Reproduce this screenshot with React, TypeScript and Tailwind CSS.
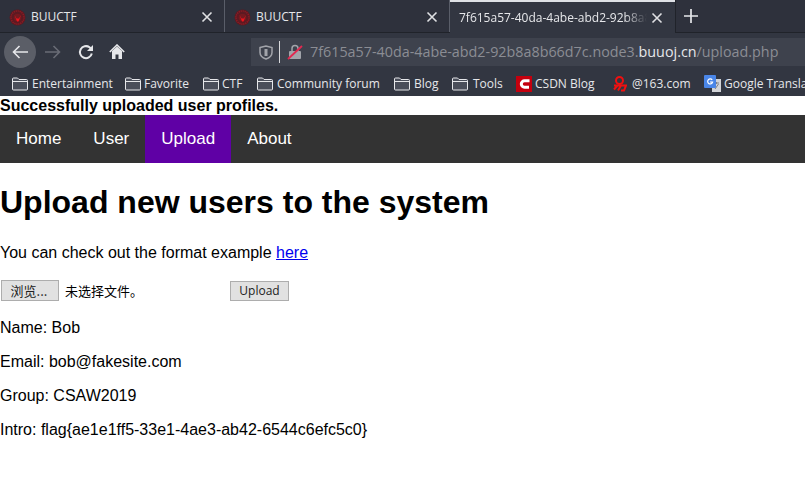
const folder = (
  <svg width="16" height="14" viewBox="0 0 16 14" className="shrink-0" fill="none">
    <path d="M0.500 12V2A1 1 0 0 1 1.500 1H5.500L7 2.500H14.500A1 1 0 0 1 15.500 3.500V12A1 1 0 0 1 14.500 13H1.500A1 1 0 0 1 0.500 12Z" fill="#4a4e5a" stroke="#e6e7ea" />
    <path d="M0.500 4.500H15.500" stroke="#e6e7ea" />
  </svg>
);

const Close = () => (
  <svg width="12" height="12" viewBox="0 0 12 12" fill="none" stroke="#dfe0e3" strokeWidth="1.600" className="shrink-0">
    <path d="M1.500 1.500L10.500 10.500M10.500 1.500L1.500 10.500" />
  </svg>
);

const Favicon = () => (
  <svg width="17" height="17" viewBox="0 0 17 17" className="shrink-0">
    <circle cx="8.500" cy="8.500" r="8" fill="#5c1a22" />
    <circle cx="8.500" cy="8.500" r="6.500" fill="none" stroke="#8c1c24" strokeWidth="1.500" strokeDasharray="1.200 0.800" />
    <circle cx="8.500" cy="8.500" r="3.800" fill="#741a20" />
    <path d="M5.500 6L8 12.500H9.500L12 6L10 9.500H7.500Z" fill="#f0141c" />
  </svg>
);

function Tab({ label }: { label: string }) {
  return (
    <div className="flex h-[32px] w-[225px] items-center border-r border-[#5a5e69] pl-[9px] pr-[11px] pt-[2px]">
      <Favicon />
      <span className="ml-[5px] flex-1 text-[12px] text-[#e6e7ea]">{label}</span>
      <Close />
    </div>
  );
}

function Mark({ label, icon, cls }: { label: string; icon: React.ReactNode; cls: string }) {
  return (
    <div className="flex shrink-0 items-center whitespace-nowrap">
      {icon}
      <span className={`${cls} text-[12px] text-[#e6e7ea]`}>{label}</span>
    </div>
  );
}

export default function App() {
  return (
    <div className="h-[495px] w-[805px] overflow-hidden bg-white font-['Liberation_Sans',Arial,sans-serif] text-[16px] text-black">
      <header className="h-[96px] bg-[#323641] font-['Open_Sans','Noto_Sans',sans-serif]">
        <div className="flex h-[33px] border-b border-[#20232a] bg-[#2e313c]">
          <Tab label="BUUCTF" />
          <Tab label="BUUCTF" />
          <div className="relative -mb-px flex h-[33px] w-[225px] items-center border-t-2 border-[#dfe1e6] bg-[#323641] pl-[9px] pr-[12px]">
            <span className="w-[188px] flex-none overflow-hidden whitespace-nowrap text-[12px] text-[#e6e7ea] [mask-image:linear-gradient(to_right,black_88%,transparent)]">
              7f615a57-40da-4abe-abd2-92b8a8b66d7c
            </span>
            <span className="ml-auto"><Close /></span>
          </div>
          <div className="flex h-[32px] w-[30px] items-center justify-center border-l border-[#20232a]">
            <svg width="14" height="14" viewBox="0 0 14 14" stroke="#e6e7ea" strokeWidth="1.700">
              <path d="M7 0V14M0 7H14" />
            </svg>
          </div>
        </div>
        <div className="flex h-[38px] items-center">
          <div className="ml-[4px] flex h-[32px] w-[32px] items-center justify-center rounded-full bg-[#5b5e67]">
            <svg width="16" height="14" viewBox="0 0 16 14" fill="none" stroke="#e6e7ea" strokeWidth="1.600">
              <path d="M16 7H1.500M7.500 1L1.500 7L7.500 13" />
            </svg>
          </div>
          <svg width="16" height="14" viewBox="0 0 16 14" fill="none" stroke="#696c75" strokeWidth="1.600" className="ml-[9px]">
            <path d="M0 7H14.500M8.500 1L14.500 7L8.500 13" />
          </svg>
          <svg width="16" height="16" viewBox="0 0 16 16" fill="none" stroke="#e6e7ea" strokeWidth="2" className="ml-[17px]">
            <path d="M13.800 9.500A6 6 0 1 1 11.500 3.300L13.500 5" />
            <path d="M15 1V7H9Z" fill="#e6e7ea" stroke="none" />
          </svg>
          <svg width="16" height="16" viewBox="0 0 16 16" fill="none" className="ml-[15px]">
            <path d="M0.800 8L8 1L15.200 8" stroke="#e6e7ea" strokeWidth="1.600" />
            <path d="M3 7V15H6.500V10.500H9.500V15H13V7L8 2.500Z" fill="#e6e7ea" />
          </svg>
          <div className="ml-[126px] flex h-[28px] flex-1 items-center bg-[#3e424d]">
            <svg width="14" height="15" viewBox="0 0 14 15" fill="none" stroke="#a2a4aa" strokeWidth="1.500" className="ml-[8px] shrink-0">
              <path d="M1 2.500L7 1L13 2.500V7.500C13 11 10 13 7 14C4 13 1 11 1 7.500Z" />
              <path d="M7 4V11" strokeWidth="3" />
            </svg>
            <div className="ml-[6px] h-[22px] w-px bg-[#d8d9dc]" />
            <svg width="16" height="16" viewBox="0 0 16 16" className="ml-[7px] shrink-0">
              <rect x="2" y="7" width="12" height="8" rx="1" fill="#a2a4aa" />
              <path d="M5 7V4.500A3 3 0 0 1 11 4.500V7" fill="none" stroke="#a2a4aa" strokeWidth="1.500" />
              <path d="M1 15L15 2" stroke="#e22850" strokeWidth="1.800" />
            </svg>
            <span className="ml-[7px] whitespace-nowrap text-[14.33px] text-[#8b8d94]">
              7f615a57-40da-4abe-abd2-92b8a8b66d7c.node3.<span className="text-[#e6e7ea]">buuoj.cn</span>/upload.php
            </span>
          </div>
        </div>
        <div className="flex h-[25px] items-center gap-[13px] pl-[12px]">
          <Mark label="Entertainment" icon={folder} cls="ml-[4px] w-[80px]" />
          <Mark label="Favorite" icon={folder} cls="ml-[3px] w-[46px]" />
          <Mark label="CTF" icon={folder} cls="ml-[3px] w-[22px]" />
          <Mark label="Community forum" icon={folder} cls="ml-[4px] w-[104px]" />
          <Mark label="Blog" icon={folder} cls="ml-[4px] w-[25px]" />
          <Mark label="Tools" icon={folder} cls="ml-[5px] w-[30px]" />
          <Mark
            label="CSDN Blog"
            cls="ml-[3px] w-[65px]"
            icon={
              <svg width="16" height="16" viewBox="0 0 16 16" fill="none" className="shrink-0">
                <rect width="16" height="16" fill="#c4000e" />
                <path d="M13.500 4.800H8.500A3.200 3.200 0 0 0 8.500 11.200H13" stroke="white" strokeWidth="3" />
              </svg>
            }
          />
          <Mark
            label="@163.com"
            cls="ml-[5px] w-[59px]"
            icon={
              <svg width="14" height="16" viewBox="0 0 14 16" fill="none" stroke="#f01010" strokeWidth="2" className="shrink-0">
                <circle cx="6.500" cy="4.500" r="3.500" />
                <path d="M1 9.500H13L11 14.500H8M4.500 9.500L1 13.500M8 9.500L5 14.500" />
              </svg>
            }
          />
          <Mark
            label="Google Translate"
            cls="ml-[2px]"
            icon={
              <svg width="18" height="18" viewBox="0 0 18 18" className="shrink-0">
                <rect x="8" y="4" width="9" height="13" fill="#d2d4d8" />
                <path d="M10 8H15M12.500 7V9M14.500 9L11 14" stroke="#7d8088" fill="none" />
                <rect width="12" height="13" rx="1" fill="#4a86e8" />
                <path d="M8.200 5A2.500 2.500 0 1 0 8.600 7H6" fill="none" stroke="white" strokeWidth="1.200" />
              </svg>
            }
          />
        </div>
      </header>
      <div className="h-[19px] text-[16px] font-bold leading-[19px]">Successfully uploaded user profiles.</div>
      <nav className="flex h-[48px] bg-[#333333] text-[17px] leading-[48px] text-white">
        <a className="px-4">Home</a>
        <a className="px-4">User</a>
        <a className="bg-[#5f00a5] px-4">Upload</a>
        <a className="px-4">About</a>
      </nav>
      <h1 className="mt-[21px] text-[32px] font-bold leading-[37px]">Upload new users to the system</h1>
      <p className="mt-[23px] leading-[18px]">
        You can check out the format example <a className="text-[#0000ee] underline">here</a>
      </p>
      <div className="mt-[18px] flex h-[21px] items-end pl-px leading-[21px]">
        <button className="h-[21px] w-[58px] border border-[#adadad] bg-[#e1e1e1] pr-[2px] text-center font-['Noto_Sans_CJK_SC','Open_Sans',sans-serif] text-[13px] leading-[18px] text-[#222]">浏览...</button>
        <span className="ml-[6px] w-[165px] font-['Noto_Sans_CJK_SC',sans-serif] text-[13px] leading-[21px]">未选择文件。</span>
        <button className="h-[20px] w-[59px] border border-[#adadad] bg-[#e1e1e1] font-['Open_Sans',sans-serif] text-[12px] leading-[18px] text-[#222]">Upload</button>
      </div>
      <p className="mt-[18px] leading-[18px]">Name: Bob</p>
      <p className="mt-[16px] leading-[18px]">Email: bob@fakesite.com</p>
      <p className="mt-[16px] leading-[18px]">Group: CSAW2019</p>
      <p className="mt-[16px] leading-[18px]">Intro: flag{'{'}ae1e1ff5-33e1-4ae3-ab42-6544c6efc5c0{'}'}</p>
    </div>
  );
}
